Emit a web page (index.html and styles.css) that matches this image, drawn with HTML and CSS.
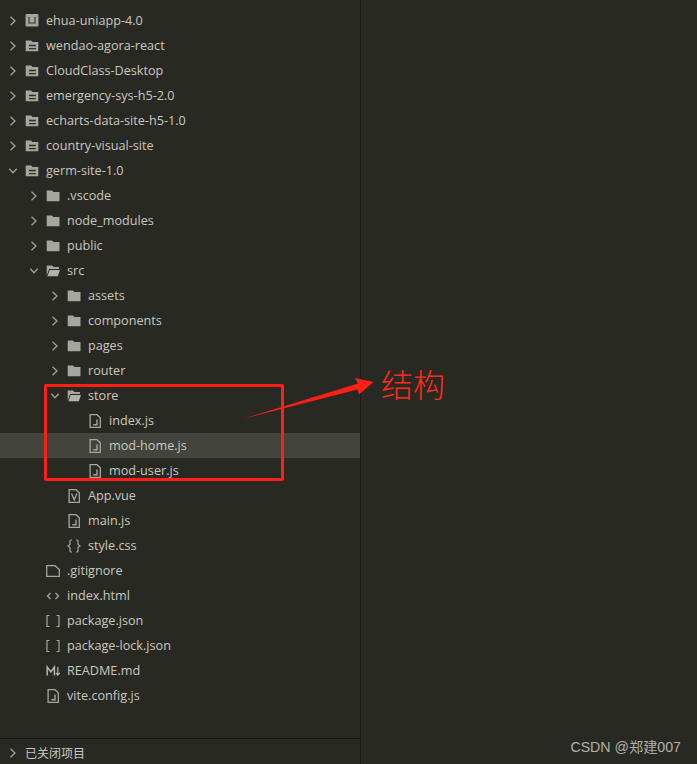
FILE: index.html
```html
<!DOCTYPE html>
<html lang="zh">
<head>
<meta charset="utf-8">
<title>Project tree</title>
<link rel="stylesheet" href="styles.css">
</head>
<body>
<svg class="defs" width="0" height="0" aria-hidden="true">
  <symbol id="chev-r" viewBox="0 0 10 12"><path d="M2.500 1.800 7 6 2.500 10.200" fill="none" stroke="currentColor" stroke-width="1.300"/></symbol>
  <symbol id="chev-d" viewBox="0 0 10 12"><path d="M1.300 3.800 5 7.800 8.700 3.800" fill="none" stroke="currentColor" stroke-width="1.300"/></symbol>
  <symbol id="uni" viewBox="0 0 14 14"><rect x=".6" y="0" width="12.800" height="12.600" rx="1" fill="#a6a69f"/><path d="M4 3V9H10V3" fill="none" stroke="#55554f" stroke-width="1.600"/></symbol>
  <symbol id="proj" viewBox="0 0 14 14"><path d="M.7 1.500H6L7.500 3H13.300V12.300H.7Z" fill="#a6a69f"/><path d="M4 6.500H10.800M4 9.700H10.800" stroke="#2f2f2a" stroke-width="1.300"/></symbol>
  <symbol id="folder" viewBox="0 0 14 14"><path d="M.7 1.500H6L7.500 3H13.500V12.300H.7Z" fill="#a6a69f"/></symbol>
  <symbol id="folder-open" viewBox="0 0 14 14"><path d="M.7 1.500H6L7.500 3H13V5H3.200L.7 11.500Z" fill="#a6a69f"/><path d="M3.800 6H14L11.800 12.300H1.300Z" fill="#b2b2ab"/></symbol>
  <symbol id="js" viewBox="0 0 14 14"><path d="M2.100 .7H9L12.300 3.900V13.300H2.100Z" fill="none" stroke="#a6a69f" stroke-width="1.300"/><path d="M9 5.500V10.700H5.300" fill="none" stroke="#a6a69f" stroke-width="1.400"/></symbol>
  <symbol id="vue" viewBox="0 0 14 14"><path d="M2.100 .7H9L12.300 3.900V13.300H2.100Z" fill="none" stroke="#a6a69f" stroke-width="1.300"/><path d="M4.500 4.500 7.200 10.800 9.900 4.500" fill="none" stroke="#a6a69f" stroke-width="1.300"/></symbol>
  <symbol id="braces" viewBox="0 0 14 14"><path d="M5 1H4Q3 1 3 2V5.500L1 7 3 8.500V12Q3 13 4 13H5M9 1H10Q11 1 11 2V5.500L13 7 11 8.500V12Q11 13 10 13H9" fill="none" stroke="#a6a69f" stroke-width="1.200"/></symbol>
  <symbol id="doc" viewBox="0 0 14 14"><path d="M.7 1.700H9L13.300 5.500V12.300H.7Z" fill="none" stroke="#a6a69f" stroke-width="1.300"/></symbol>
  <symbol id="code" viewBox="0 0 14 14"><path d="M4.500 4 1.500 7 4.500 10M9.500 4 12.500 7 9.500 10" fill="none" stroke="#a6a69f" stroke-width="1.300"/></symbol>
  <symbol id="brackets" viewBox="0 0 14 14"><path d="M3.500 1.500H1V12.500H3.500M10.500 1.500H13V12.500H10.500" fill="none" stroke="#a6a69f" stroke-width="1.200"/></symbol>
  <symbol id="md" viewBox="0 0 14 14"><path d="M1.200 11.500V3L4.800 8 8.400 3V11.500" fill="none" stroke="#b4b4ad" stroke-width="1.500"/><path d="M11.800 3V11M9.800 8.800 11.800 11 13.800 8.800" fill="none" stroke="#b4b4ad" stroke-width="1.200"/></symbol>
</svg>

<div class="window">
  <aside class="sidebar">
    <ul class="tree">
      <li class="row l0"><svg class="tw"><use href="#chev-r"/></svg><svg class="ic"><use href="#uni"/></svg><span>ehua-uniapp-4.0</span></li>
      <li class="row l0"><svg class="tw"><use href="#chev-r"/></svg><svg class="ic"><use href="#proj"/></svg><span>wendao-agora-react</span></li>
      <li class="row l0"><svg class="tw"><use href="#chev-r"/></svg><svg class="ic"><use href="#proj"/></svg><span>CloudClass-Desktop</span></li>
      <li class="row l0"><svg class="tw"><use href="#chev-r"/></svg><svg class="ic"><use href="#proj"/></svg><span>emergency-sys-h5-2.0</span></li>
      <li class="row l0"><svg class="tw"><use href="#chev-r"/></svg><svg class="ic"><use href="#proj"/></svg><span>echarts-data-site-h5-1.0</span></li>
      <li class="row l0"><svg class="tw"><use href="#chev-r"/></svg><svg class="ic"><use href="#proj"/></svg><span>country-visual-site</span></li>
      <li class="row l0"><svg class="tw"><use href="#chev-d"/></svg><svg class="ic"><use href="#proj"/></svg><span>germ-site-1.0</span></li>
      <li class="row l1"><svg class="tw"><use href="#chev-r"/></svg><svg class="ic"><use href="#folder"/></svg><span>.vscode</span></li>
      <li class="row l1"><svg class="tw"><use href="#chev-r"/></svg><svg class="ic"><use href="#folder"/></svg><span>node_modules</span></li>
      <li class="row l1"><svg class="tw"><use href="#chev-r"/></svg><svg class="ic"><use href="#folder"/></svg><span>public</span></li>
      <li class="row l1"><svg class="tw"><use href="#chev-d"/></svg><svg class="ic"><use href="#folder-open"/></svg><span>src</span></li>
      <li class="row l2"><svg class="tw"><use href="#chev-r"/></svg><svg class="ic"><use href="#folder"/></svg><span>assets</span></li>
      <li class="row l2"><svg class="tw"><use href="#chev-r"/></svg><svg class="ic"><use href="#folder"/></svg><span>components</span></li>
      <li class="row l2"><svg class="tw"><use href="#chev-r"/></svg><svg class="ic"><use href="#folder"/></svg><span>pages</span></li>
      <li class="row l2"><svg class="tw"><use href="#chev-r"/></svg><svg class="ic"><use href="#folder"/></svg><span>router</span></li>
      <li class="row l2"><svg class="tw"><use href="#chev-d"/></svg><svg class="ic"><use href="#folder-open"/></svg><span>store</span></li>
      <li class="row l3"><svg class="tw"></svg><svg class="ic"><use href="#js"/></svg><span>index.js</span></li>
      <li class="row l3 selected"><svg class="tw"></svg><svg class="ic"><use href="#js"/></svg><span>mod-home.js</span></li>
      <li class="row l3"><svg class="tw"></svg><svg class="ic"><use href="#js"/></svg><span>mod-user.js</span></li>
      <li class="row l2"><svg class="tw"></svg><svg class="ic"><use href="#vue"/></svg><span>App.vue</span></li>
      <li class="row l2"><svg class="tw"></svg><svg class="ic"><use href="#js"/></svg><span>main.js</span></li>
      <li class="row l2"><svg class="tw"></svg><svg class="ic"><use href="#braces"/></svg><span>style.css</span></li>
      <li class="row l1"><svg class="tw"></svg><svg class="ic"><use href="#doc"/></svg><span>.gitignore</span></li>
      <li class="row l1"><svg class="tw"></svg><svg class="ic"><use href="#code"/></svg><span>index.html</span></li>
      <li class="row l1"><svg class="tw"></svg><svg class="ic"><use href="#brackets"/></svg><span>package.json</span></li>
      <li class="row l1"><svg class="tw"></svg><svg class="ic"><use href="#brackets"/></svg><span>package-lock.json</span></li>
      <li class="row l1"><svg class="tw"></svg><svg class="ic"><use href="#md"/></svg><span>README.md</span></li>
      <li class="row l1"><svg class="tw"></svg><svg class="ic"><use href="#js"/></svg><span>vite.config.js</span></li>
    </ul>
    <footer class="closed"><svg class="tw"><use href="#chev-r"/></svg><span>已关闭项目</span></footer>
  </aside>
  <main class="editor"></main>
</div>

<div class="mark-box"></div>
<svg class="mark-arrow" width="130" height="42" viewBox="0 0 130 42" aria-hidden="true"><path d="M0 41.500 114 6.500 111 1 129.500 5 115 17.500 113.500 12.500Z" fill="#ff2015"/></svg>
<div class="mark-label">结构</div>
<div class="watermark">CSDN @郑建007</div>
</body>
</html>
```
FILE: styles.css
```css
* { box-sizing: border-box; }
html, body { margin: 0; height: 100%; }
body {
  background: #282923;
  color: #c8c8c0;
  font: 12.650px/25px "Open Sans", "Noto Sans CJK SC", sans-serif;
  overflow: hidden;
  position: relative;
}
.defs { position: absolute; }
.window { display: flex; height: 764px; }
.sidebar {
  width: 361px;
  border-right: 1px solid #1a1a17;
  display: flex;
  flex-direction: column;
}
.tree { list-style: none; margin: 0; padding: 8px 0 0; flex: 1; }
.row { display: flex; align-items: center; height: 25px; }
.l0 { padding-left: 8px; }
.l1 { padding-left: 29px; }
.l2 { padding-left: 50px; }
.l3 { padding-left: 71px; }
.selected { background: #43443c; }
.tw { width: 10px; height: 12px; margin-right: 7px; color: #a2a29b; flex: none; }
.ic { width: 14px; height: 14px; margin-right: 7px; flex: none; }
.closed {
  height: 26px;
  border-top: 1px solid #171714;
  display: flex;
  align-items: center;
  padding: 2px 0 0 8px;
  font-family: "Noto Sans CJK SC", sans-serif;
  font-size: 12px;
}
.editor { flex: 1; }
.mark-box {
  position: absolute;
  left: 44px;
  top: 384px;
  width: 240px;
  height: 97px;
  border: 3px solid #ff2015;
  border-radius: 2px;
}
.mark-arrow { position: absolute; left: 244px; top: 377px; overflow: visible; }
.mark-label {
  position: absolute;
  left: 381px;
  top: 361px;
  font: 300 32px/44px "Noto Sans CJK SC", sans-serif;
  color: #ff2a1c;
}
.watermark {
  position: absolute;
  right: 16px;
  top: 737px;
  font: 14.200px/20px "Liberation Sans", "Noto Sans CJK SC", sans-serif;
  color: #b0b0ac;
}
```
